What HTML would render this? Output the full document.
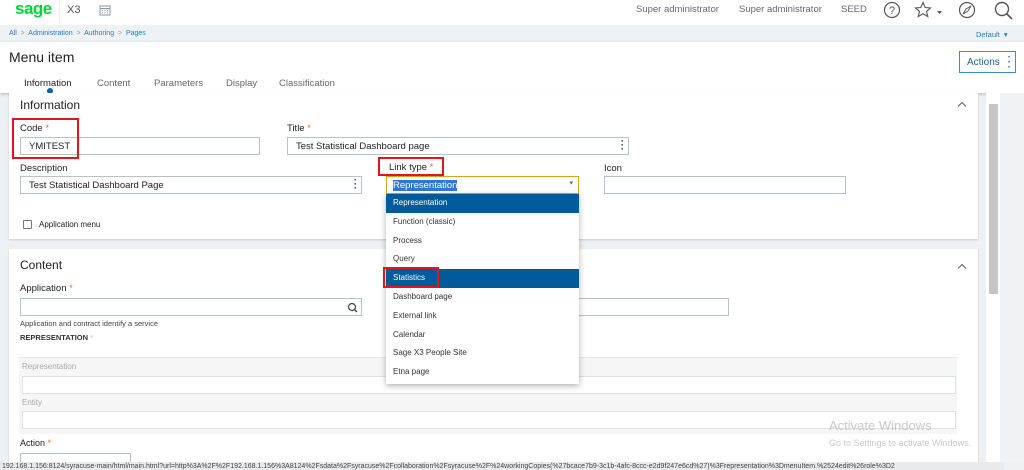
<!DOCTYPE html>
<html><head><style>
*{box-sizing:border-box;margin:0;padding:0}
body{width:1024px;height:470px;overflow:hidden;position:relative;background:#eef1f3;font-family:"Liberation Sans",sans-serif;color:#222}
.a{position:absolute}
.lbl{position:absolute;font-size:9.5px;color:#222}
.st{color:#f26a21}
.inp{position:absolute;height:18px;border:1px solid #b9c1c6;background:#fff;font-size:9.5px;padding:3px 8px;color:#222}
.dd{position:absolute;left:386px;top:194px;width:193px;height:190px;background:#fff;box-shadow:0 2px 6px rgba(0,0,0,.3);font-size:8px}
.dd div{height:18.8px;padding:4px 7px;color:#333}
.dd .sel{background:#005b9a;color:#fff}
.red{position:absolute;border:2px solid #e3141e}
.card{position:absolute;left:9px;width:969px;background:#fff;box-shadow:0 1px 2px rgba(0,0,0,.15)}
</style></head><body>
<div class="a" style="left:0;top:0;width:1024px;height:25px;background:#fff"></div>
<div class="a" style="left:15px;top:-1px;font-size:17px;font-weight:bold;color:#00d639;letter-spacing:-0.5px">sage</div>
<div class="a" style="left:59px;top:0;width:1px;height:24px;background:#eee"></div>
<div class="a" style="left:67px;top:4px;font-size:11px;color:#555">X3</div>
<svg class="a" style="left:99px;top:4px" width="12" height="12"><rect x="1" y="2" width="10" height="9" fill="none" stroke="#8a96a0"/><line x1="1" y1="4.5" x2="11" y2="4.5" stroke="#8a96a0"/><g fill="#8a96a0"><rect x="3" y="6" width="1" height="1"/><rect x="5.5" y="6" width="1" height="1"/><rect x="8" y="6" width="1" height="1"/><rect x="3" y="8.3" width="1" height="1"/><rect x="5.5" y="8.3" width="1" height="1"/><rect x="8" y="8.3" width="1" height="1"/></g></svg>
<div class="a" style="left:636px;top:4px;font-size:9.5px;color:#667">Super administrator</div>
<div class="a" style="left:739px;top:4px;font-size:9.5px;color:#667">Super administrator</div>
<div class="a" style="left:841px;top:4px;font-size:9.5px;color:#667">SEED</div>
<svg class="a" style="left:882px;top:0px" width="20" height="20"><circle cx="10" cy="10" r="7.5" fill="none" stroke="#555" stroke-width="1.2"/><text x="10" y="14" font-size="11" text-anchor="middle" fill="#555" font-family="Liberation Sans">?</text></svg>
<svg class="a" style="left:913px;top:0px" width="32" height="20"><path d="M10 2.5l2.2 5 5.3.4-4 3.5 1.3 5.2L10 13.8l-4.8 2.8 1.3-5.2-4-3.5 5.3-.4z" fill="none" stroke="#555" stroke-width="1.1"/><path d="M24 11h5l-2.5 3z" fill="#555"/></svg>
<svg class="a" style="left:957px;top:0px" width="20" height="20"><circle cx="10" cy="10" r="7.5" fill="none" stroke="#555" stroke-width="1.2"/><path d="M14 6l-5 3-3 5 5-3z" fill="none" stroke="#555"/></svg>
<svg class="a" style="left:993px;top:0px" width="22" height="22"><circle cx="9" cy="9" r="6.5" fill="none" stroke="#555" stroke-width="1.4"/><line x1="13.5" y1="13.5" x2="19" y2="19" stroke="#555" stroke-width="1.6"/></svg>
<div class="a" style="left:0;top:25px;width:1024px;height:17px;background:#eef2f4"></div>
<div class="a" style="left:9px;top:30px;font-size:7px;color:#2a79c0">All <span style="color:#999">&nbsp;&gt;&nbsp;</span> Administration <span style="color:#999">&nbsp;&gt;&nbsp;</span> Authoring <span style="color:#999">&nbsp;&gt;&nbsp;</span> Pages</div>
<div class="a" style="left:976px;top:30px;font-size:7.5px;color:#2a79c0">Default &nbsp;▾</div>
<div class="a" style="left:0;top:42px;width:1024px;height:51px;background:#fff;box-shadow:0 1px 3px rgba(0,0,0,.25)"></div>
<div class="a" style="left:9px;top:49px;font-size:14px;color:#222">Menu item</div>
<div class="a" style="left:959px;top:51px;width:57px;height:22px;border:1px solid #3a8bd0;font-size:10px;color:#1b5e96;padding:5px 0 0 7px">Actions <span style="position:absolute;right:4px;top:3px;font-weight:bold;color:#2a79c0;font-size:10px;line-height:5px">·<br>·<br>·</span></div>
<div class="a" style="left:24px;top:78px;font-size:9.5px;color:#222">Information</div>
<div class="a" style="left:97px;top:78px;font-size:9.5px;color:#666">Content</div>
<div class="a" style="left:154px;top:78px;font-size:9.5px;color:#666">Parameters</div>
<div class="a" style="left:226px;top:78px;font-size:9.5px;color:#666">Display</div>
<div class="a" style="left:279px;top:78px;font-size:9.5px;color:#666">Classification</div>
<div class="a" style="left:47px;top:88px;width:6px;height:6px;border-radius:3px;background:#0a62b0"></div>
<div class="a" style="left:986px;top:93px;width:14px;height:369px;background:#fff"></div>
<div class="a" style="left:989px;top:104px;width:9px;height:190px;background:#c4c4c4"></div>
<div class="a" style="left:1000px;top:93px;width:24px;height:369px;background:#f1f2f3"></div>
<div class="card" style="top:93px;height:146px"></div>
<div class="a" style="left:20px;top:98px;font-size:12px">Information</div>
<svg class="a" style="left:957px;top:101px" width="10" height="7"><path d="M1 5.5L5 1.5 9 5.5" fill="none" stroke="#666" stroke-width="1.1"/></svg>
<div class="lbl" style="left:20px;top:123px">Code <span class="st">*</span></div>
<div class="inp" style="left:20px;top:137px;width:240px">YMITEST</div>
<div class="red" style="left:12px;top:118px;width:67px;height:41px"></div>
<div class="lbl" style="left:287px;top:123px">Title <span class="st">*</span></div>
<div class="inp" style="left:287px;top:137px;width:342px">Test Statistical Dashboard page<span style="position:absolute;right:4px;top:2px;line-height:4px;font-weight:bold">·<br>·<br>·</span></div>
<div class="lbl" style="left:20px;top:163px">Description</div>
<div class="inp" style="left:20px;top:176px;width:342px">Test Statistical Dashboard Page<span style="position:absolute;right:4px;top:2px;line-height:4px;font-weight:bold">·<br>·<br>·</span></div>
<div class="lbl" style="left:389px;top:162px">Link type <span class="st">*</span></div>
<div class="red" style="left:378px;top:157px;width:66px;height:19px"></div>
<div class="inp" style="left:386px;top:176px;width:193px;border-color:#d9a21b;padding-left:6px"><span style="background:#3375d6;color:#fff">Representation</span><span style="position:absolute;right:5px;top:2px;font-size:7px;color:#666">▾</span></div>
<div class="lbl" style="left:604px;top:163px">Icon</div>
<div class="inp" style="left:604px;top:176px;width:242px"></div>
<div class="a" style="left:23px;top:220px;width:9px;height:9px;border:1px solid #777;border-radius:1px"></div>
<div class="lbl" style="left:39px;top:220px;font-size:8px">Application menu</div>
<div class="card" style="top:249px;height:213px"></div>
<div class="a" style="left:20px;top:258px;font-size:12px">Content</div>
<svg class="a" style="left:957px;top:263px" width="10" height="7"><path d="M1 5.5L5 1.5 9 5.5" fill="none" stroke="#666" stroke-width="1.1"/></svg>
<div class="lbl" style="left:20px;top:283px">Application <span class="st">*</span></div>
<div class="inp" style="left:20px;top:298px;width:342px"><svg style="position:absolute;right:3px;top:3px" width="11" height="11"><circle cx="5" cy="5" r="3.5" fill="none" stroke="#444" stroke-width="1.2"/><line x1="7.5" y1="7.5" x2="10" y2="10" stroke="#444" stroke-width="1.4"/></svg></div>
<div class="inp" style="left:560px;top:298px;width:169px"></div>
<div class="lbl" style="left:20px;top:319px;font-size:7.5px;color:#444">Application and contract identify a service</div>
<div class="lbl" style="left:20px;top:333px;font-size:7.5px;font-weight:bold;color:#333">REPRESENTATION <span style="color:#ccc">*</span></div>
<div class="a" style="left:19px;top:357px;width:938px;height:77px;background:#f6f6f6;border-top:1px solid #e8e8e8"></div>
<div class="lbl" style="left:22px;top:362px;color:#aaa;font-size:8px">Representation</div>
<div class="inp" style="left:22px;top:376px;width:934px;border-color:#dde2e5"></div>
<div class="lbl" style="left:22px;top:398px;color:#aaa;font-size:8px">Entity</div>
<div class="inp" style="left:22px;top:411px;width:934px;border-color:#dde2e5"></div>
<div class="lbl" style="left:20px;top:438px;font-size:9px">Action <span class="st">*</span></div>
<div class="inp" style="left:20px;top:453px;width:111px;height:12px"></div>
<div class="a" style="left:829px;top:418px;font-size:13px;color:#c8c8c8">Activate Windows</div>
<div class="a" style="left:829px;top:438px;font-size:9px;color:#c8c8c8">Go to Settings to activate Windows.</div>
<div class="dd">
<div class="sel">Representation</div><div>Function (classic)</div><div>Process</div><div>Query</div><div class="sel">Statistics</div><div>Dashboard page</div><div>External link</div><div>Calendar</div><div>Sage X3 People Site</div><div>Etna page</div>
</div>
<div class="red" style="left:383px;top:267px;width:56px;height:21px"></div>
<div class="a" style="left:0;top:462px;width:1004px;height:8px;background:#e8eaec;font-size:7px;color:#444;white-space:nowrap;overflow:hidden;line-height:9px;padding-left:2px">192.168.1.156:8124/syracuse-main/html/main.html?url=http%3A%2F%2F192.168.1.156%3A8124%2Fsdata%2Fsyracuse%2Fcollaboration%2Fsyracuse%2F%24workingCopies(%27bcace7b9-3c1b-4afc-8ccc-e2d9f247e6cd%27)%3Frepresentation%3DmenuItem.%2524edit%26role%3D2</div>
</body></html>
